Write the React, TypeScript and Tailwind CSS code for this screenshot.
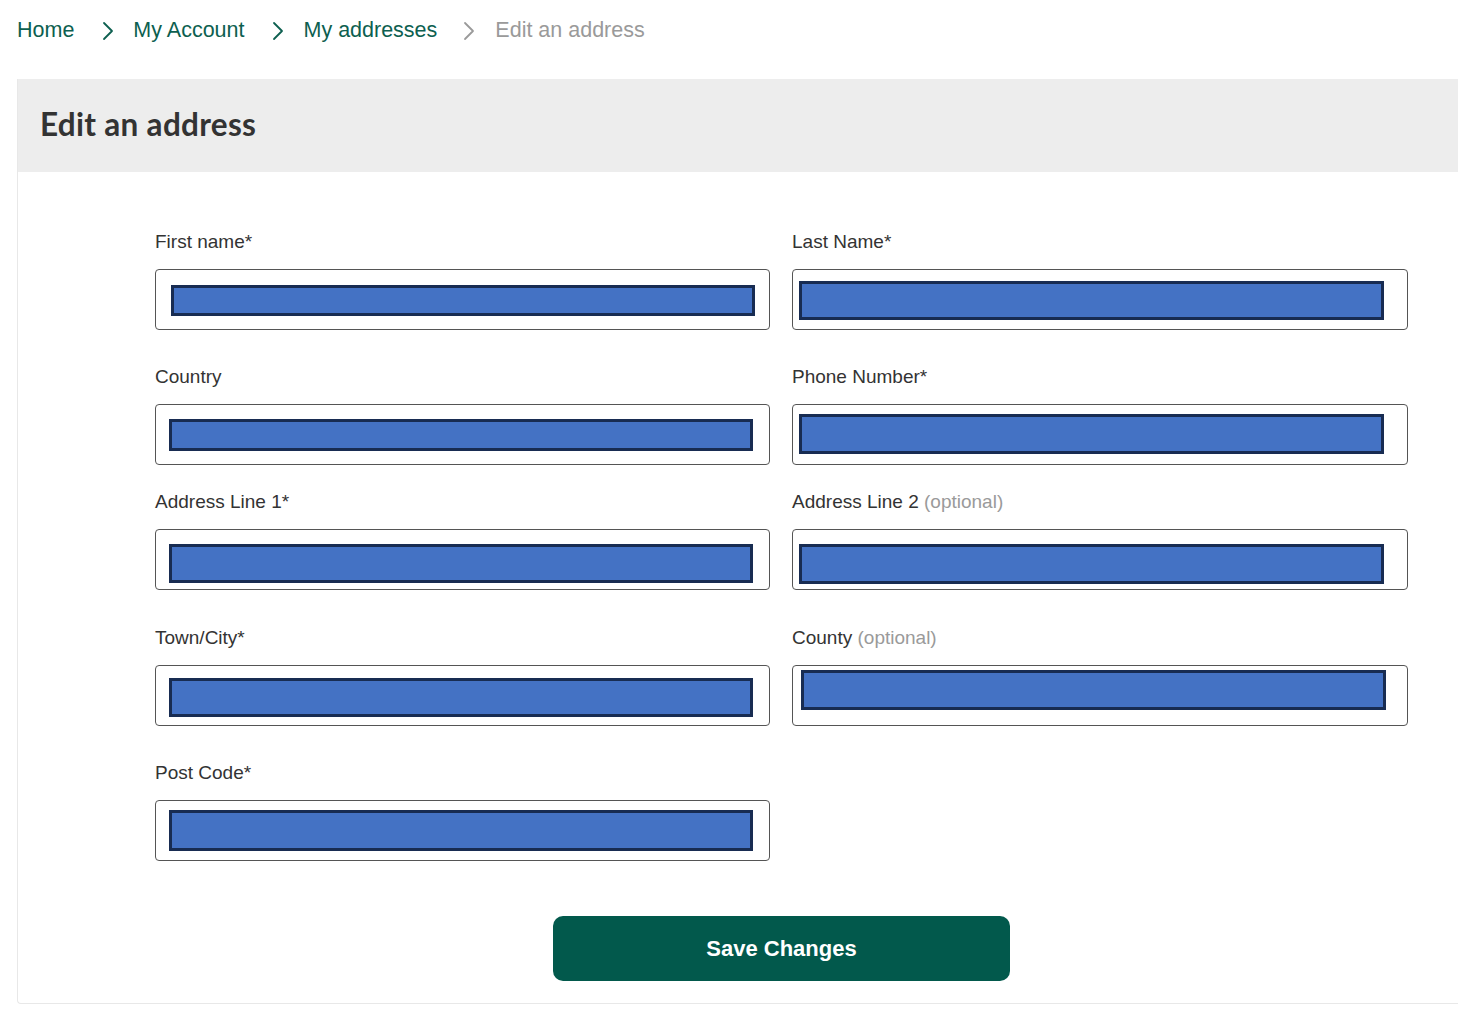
import React from "react";

type Field = {
  label: string;
  req?: boolean;
  optional?: boolean;
  box: string;
};

const rows: Field[][] = [
  [
    { label: "First name", req: true, box: "ml-[15px] mt-[15px] w-[584px] h-[31px]" },
    { label: "Last Name", req: true, box: "ml-[6px] mt-[11px] w-[585px] h-[39px]" },
  ],
  [
    { label: "Country", box: "ml-[13px] mt-[14px] w-[584px] h-[32px]" },
    { label: "Phone Number", req: true, box: "ml-[6px] mt-[9px] w-[585px] h-[40px]" },
  ],
  [
    { label: "Address Line 1", req: true, box: "ml-[13px] mt-[14px] w-[584px] h-[39px]" },
    { label: "Address Line 2", optional: true, box: "ml-[6px] mt-[14px] w-[585px] h-[40px]" },
  ],
  [
    { label: "Town/City", req: true, box: "ml-[13px] mt-[12px] w-[584px] h-[39px]" },
    { label: "County", optional: true, box: "ml-[8px] mt-[4px] w-[585px] h-[40px]" },
  ],
  [{ label: "Post Code", req: true, box: "ml-[13px] mt-[9px] w-[584px] h-[41px]" }],
];

const rowMargins = ["mt-0", "mt-[36px]", "mt-[26px]", "mt-[37px]", "mt-[36px]"];

function Chevron({ color }: { color: string }) {
  return (
    <svg width="12" height="20" viewBox="0 0 12 20" className="shrink-0">
      <polyline
        points="2,2 10,10 2,18"
        fill="none"
        stroke={color}
        strokeWidth="1.8"
        strokeLinecap="round"
        strokeLinejoin="round"
      />
    </svg>
  );
}

function FieldBox({ f }: { f: Field }) {
  return (
    <div>
      <div className="text-[19px] leading-[22px] text-[#333333] whitespace-nowrap">
        {f.label}
        {f.req ? "*" : ""}
        {f.optional ? <span className="text-[#9a9a9a]"> (optional)</span> : null}
      </div>
      <div className="mt-[16px] h-[61px] border border-[#555555] rounded-[4px] bg-white flex items-start">
        <div className={`${f.box} bg-[#4472c4] border-[3px] border-[#182c52]`} />
      </div>
    </div>
  );
}

export default function App() {
  return (
    <div
      className="min-h-[1032px] bg-white overflow-hidden"
      style={{ fontFamily: '"Liberation Sans", Arial, sans-serif' }}
    >
      <nav className="pl-[17px] pt-[18px] h-[79px] flex items-start text-[21.5px] leading-[25px]">
        <span className="text-[#0d5f50]">Home</span>
        <span className="ml-[28px] mr-[19px] mt-[3px]">
          <Chevron color="#0d5f50" />
        </span>
        <span className="text-[#0d5f50]">My Account</span>
        <span className="ml-[27px] mr-[20px] mt-[3px]">
          <Chevron color="#0d5f50" />
        </span>
        <span className="text-[#0d5f50]">My addresses</span>
        <span className="ml-[26px] mr-[20px] mt-[3px]">
          <Chevron color="#9a9a9a" />
        </span>
        <span className="text-[#9a9a9a]">Edit an address</span>
      </nav>

      <div className="ml-[17px] w-[1460px] border-l border-b border-[#e8e8e8] rounded-bl-[4px]">
        <div className="h-[93px] bg-[#ededed] flex items-center pl-[22px] pb-[2px]">
          <h1
            className="text-[31.5px] font-bold text-[#333333] tracking-[0.3px]"
            style={{ fontFamily: 'Lato, "Noto Sans", sans-serif' }}
          >
            Edit an address
          </h1>
        </div>

        <div className="pl-[137px] pt-[59px] pb-[22px]">
          <div className="w-[1253px]">
            {rows.map((r, i) => (
              <div key={i} className={`grid grid-cols-[615px_616px] gap-x-[22px] ${rowMargins[i]}`}>
                {r.map((f) => (
                  <FieldBox key={f.label} f={f} />
                ))}
              </div>
            ))}
            <div className="mt-[55px] flex justify-center">
              <button className="w-[457px] h-[65px] rounded-[10px] bg-[#02594c] text-white text-[22px] font-bold">
                Save Changes
              </button>
            </div>
          </div>
        </div>
      </div>
    </div>
  );
}
